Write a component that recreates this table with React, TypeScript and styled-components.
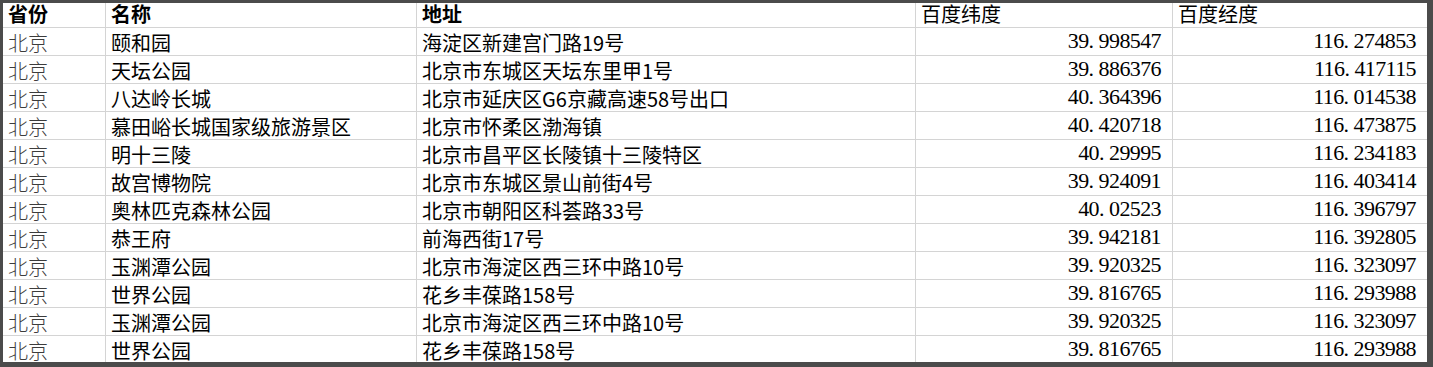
import styled, { createGlobalStyle } from 'styled-components'

const GlobalStyle = createGlobalStyle`
  html, body {
    margin: 0;
    padding: 0;
    background: #ffffff;
  }
`

const rows = [
  ['北京', '颐和园', '海淀区新建宫门路19号', '39.998547', '116.274853'],
  ['北京', '天坛公园', '北京市东城区天坛东里甲1号', '39.886376', '116.417115'],
  ['北京', '八达岭长城', '北京市延庆区G6京藏高速58号出口', '40.364396', '116.014538'],
  ['北京', '慕田峪长城国家级旅游景区', '北京市怀柔区渤海镇', '40.420718', '116.473875'],
  ['北京', '明十三陵', '北京市昌平区长陵镇十三陵特区', '40.29995', '116.234183'],
  ['北京', '故宫博物院', '北京市东城区景山前街4号', '39.924091', '116.403414'],
  ['北京', '奥林匹克森林公园', '北京市朝阳区科荟路33号', '40.02523', '116.396797'],
  ['北京', '恭王府', '前海西街17号', '39.942181', '116.392805'],
  ['北京', '玉渊潭公园', '北京市海淀区西三环中路10号', '39.920325', '116.323097'],
  ['北京', '世界公园', '花乡丰葆路158号', '39.816765', '116.293988'],
  ['北京', '玉渊潭公园', '北京市海淀区西三环中路10号', '39.920325', '116.323097'],
  ['北京', '世界公园', '花乡丰葆路158号', '39.816765', '116.293988'],
]

// SimSun-style numbers: the dot takes a full digit width
function Num({ value }: { value: string }) {
  const [int, frac] = value.split('.')
  return (
    <>
      {int}
      <Dot>.</Dot>
      {frac}
    </>
  )
}

export default function App() {
  return (
    <Frame>
      <GlobalStyle />
      <Sheet>
        <HeaderCell $bold>省份</HeaderCell>
        <HeaderCell $bold>名称</HeaderCell>
        <HeaderCell $bold>地址</HeaderCell>
        <HeaderCell>百度纬度</HeaderCell>
        <HeaderCell $last>百度经度</HeaderCell>
        {rows.map((r, i) => (
          <Row key={i}>
            <Cell $muted>{r[0]}</Cell>
            <Cell>{r[1]}</Cell>
            <Cell>{r[2]}</Cell>
            <NumCell>
              <Num value={r[3]} />
            </NumCell>
            <NumCell $last>
              <Num value={r[4]} />
            </NumCell>
          </Row>
        ))}
      </Sheet>
    </Frame>
  )
}

const Frame = styled.div`
  box-sizing: border-box;
  width: 1433px;
  height: 367px;
  overflow: hidden;
  border-style: solid;
  border-color: #4b4b4b;
  border-width: 3px 6px 5px 3px;
  background: #ffffff;
`

const Sheet = styled.div`
  display: grid;
  grid-template-columns: 103px 311px 499px 257px 254px;
  grid-template-rows: 25px;
  grid-auto-rows: 28px;
`

const Row = styled.div`
  display: contents;
`

const baseCell = `
  box-sizing: border-box;
  display: flex;
  align-items: flex-end;
  border-bottom: 1px solid #d4d4d4;
  white-space: nowrap;
  line-height: 1;
`

const HeaderCell = styled.div<{ $bold?: boolean; $last?: boolean }>`
  ${baseCell}
  padding: 0 4px 3px 5px;
  border-right: ${(p) => (p.$last ? 'none' : '1px solid #d4d4d4')};
  font-family: 'Noto Sans CJK SC', sans-serif;
  font-size: 20px;
  font-weight: ${(p) => (p.$bold ? 700 : 400)};
  color: #000000;
`

const Cell = styled.div<{ $muted?: boolean }>`
  ${baseCell}
  padding: 0 4px 2px 5px;
  border-right: 1px solid #d4d4d4;
  font-family: 'Noto Sans CJK SC', sans-serif;
  font-size: 20px;
  font-weight: ${(p) => (p.$muted ? 300 : 400)};
  color: ${(p) => (p.$muted ? '#3c3c3c' : '#000000')};
`

const NumCell = styled.div<{ $last?: boolean }>`
  ${baseCell}
  justify-content: flex-end;
  padding: 0 11px 3px 4px;
  border-right: ${(p) => (p.$last ? 'none' : '1px solid #d4d4d4')};
  font-family: 'Liberation Serif', 'Noto Sans CJK SC', serif;
  font-size: 22px;
  letter-spacing: -0.6px;
  color: #000000;
`

const Dot = styled.span`
  display: inline-block;
  width: 10px;
  text-align: left;
`
